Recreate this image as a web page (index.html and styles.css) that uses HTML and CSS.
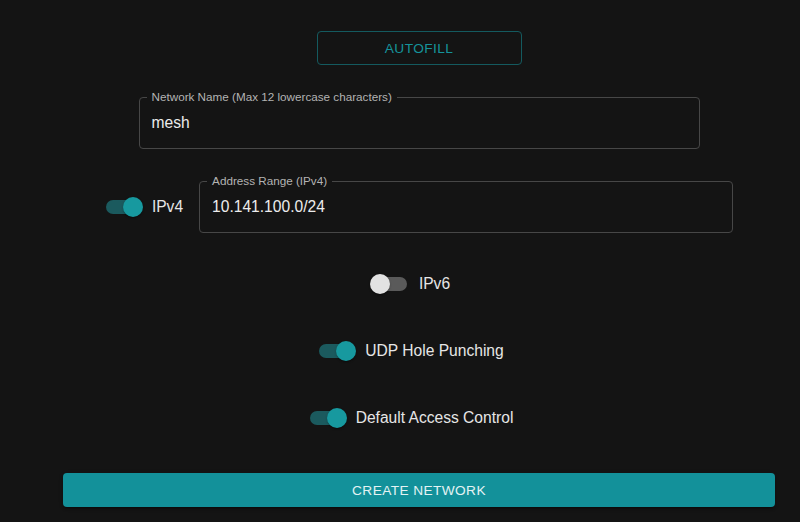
FILE: index.html
```html
<!DOCTYPE html>
<html>
<head>
<meta charset="utf-8">
<link rel="stylesheet" href="styles.css">
</head>
<body>
<div class="container">
  <button class="btn-outlined">Autofill</button>

  <fieldset class="field field-name">
    <legend>Network Name (Max 12 lowercase characters)</legend>
    <div class="field-value">mesh</div>
  </fieldset>

  <div class="row row-ipv4">
    <label class="control control-offset">
      <span class="switch on"><span class="track"></span><span class="thumb"></span></span>
      <span class="control-label">IPv4</span>
    </label>
    <fieldset class="field field-range">
      <legend>Address Range (IPv4)</legend>
      <div class="field-value">10.141.100.0/24</div>
    </fieldset>
  </div>

  <div class="row row-ipv6">
    <label class="control">
      <span class="switch"><span class="track"></span><span class="thumb"></span></span>
      <span class="control-label">IPv6</span>
    </label>
  </div>

  <div class="row row-udp">
    <label class="control">
      <span class="switch on"><span class="track"></span><span class="thumb"></span></span>
      <span class="control-label">UDP Hole Punching</span>
    </label>
  </div>

  <div class="row row-dac">
    <label class="control">
      <span class="switch on"><span class="track"></span><span class="thumb"></span></span>
      <span class="control-label">Default Access Control</span>
    </label>
  </div>

  <button class="btn-contained">Create Network</button>
</div>
</body>
</html>
```

FILE: styles.css
```css
html, body {
  margin: 0;
  padding: 0;
  background: #141414;
}
body {
  font-family: "Liberation Sans", Arial, Helvetica, sans-serif;
  color: #e0e0e0;
  width: 800px;
  height: 522px;
  overflow: hidden;
}
.container {
  margin-left: 63px;
  width: 712px;
  padding-top: 31px;
  display: flex;
  flex-direction: column;
  align-items: center;
}
.btn-outlined {
  width: 205px;
  height: 34px;
  box-sizing: border-box;
  background: transparent;
  border: 1px solid #145a5f;
  border-radius: 4px;
  color: #15939b;
  font-family: inherit;
  font-size: 13.7px;
  text-transform: uppercase;
  letter-spacing: 0.4px;
  padding: 0;
  margin: 0 0 25px 0;
}
.field {
  margin: 0;
  border: 1px solid #474747;
  border-radius: 4px;
  padding: 0 12px 0 7px;
  box-sizing: border-box;
}
.field legend {
  font-size: 11.7px;
  line-height: 14px;
  padding: 0 5px;
  color: #b3b3b3;
}
.field-value {
  padding: 9px 0 15px 5px;
  line-height: 20px;
  font-size: 15.6px;
  color: #ececec;
}
.field-name {
  width: 561px;
}
.field-range {
  width: 534px;
}
.row {
  display: flex;
  justify-content: center;
  align-items: center;
  width: 100%;
}
.row-ipv4 {
  margin-top: 25px;
}
.row-ipv6 {
  margin-top: 32px;
}
.row-udp {
  margin-top: 29px;
}
.row-dac {
  margin-top: 29px;
}
.control {
  display: inline-flex;
  align-items: center;
  margin-left: -11px;
  margin-right: 16px;
  font-size: 15.6px;
  color: #e6e6e6;
}
.control-offset {
  margin-top: 6px;
}
.switch {
  position: relative;
  display: inline-block;
  width: 58px;
  height: 38px;
  padding: 12px;
  box-sizing: border-box;
}
.track {
  display: block;
  width: 34px;
  height: 14px;
  border-radius: 7px;
  background: #5a5a5a;
}
.thumb {
  position: absolute;
  top: 9px;
  left: 9px;
  width: 20px;
  height: 20px;
  border-radius: 50%;
  background: #e2e2e2;
  box-shadow: 0 2px 1px -1px rgba(0,0,0,0.2), 0 1px 1px 0 rgba(0,0,0,0.14), 0 1px 3px 0 rgba(0,0,0,0.12);
}
.switch.on .track {
  background: #1b5a5e;
}
.switch.on .thumb {
  left: 29px;
  background: #17999f;
}
.btn-contained {
  margin-top: 36px;
  width: 712px;
  height: 34px;
  box-sizing: border-box;
  border: none;
  border-radius: 4px;
  background: #13919a;
  color: #e4f3f4;
  font-family: inherit;
  font-size: 13.7px;
  text-transform: uppercase;
  letter-spacing: 0.4px;
  padding: 0;
  box-shadow: 0 3px 1px -2px rgba(0,0,0,0.2), 0 2px 2px 0 rgba(0,0,0,0.14), 0 1px 5px 0 rgba(0,0,0,0.12);
}
```
